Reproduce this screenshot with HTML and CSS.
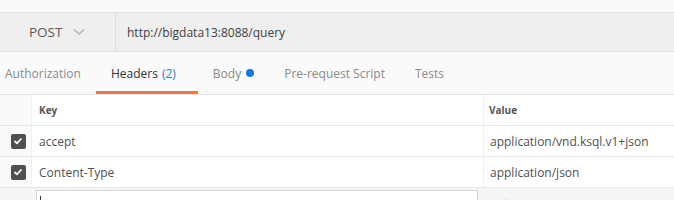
FILE: index.html
```html
<!DOCTYPE html>
<html lang="en">
<head>
    <meta charset="UTF-8">
    <title>request</title>
    <link rel="stylesheet" href="styles.css">
</head>
<body>

    <!-- 请求地址栏 -->
    <div class="url-bar">
        <div class="method">
            <span>POST</span>
            <svg class="chevron" width="12" height="8" viewBox="0 0 12 8"><path d="M1 1.5 L6 6 L11 1.5" fill="none" stroke="#b5b5b5" stroke-width="1.6"/></svg>
        </div>
        <div class="url">http://bigdata13:8088/query</div>
    </div>

    <div class="tabs">
        <div class="tab">Authorization</div>
        <div class="tab active">Headers <span class="count">(2)</span></div>
        <div class="tab">Body <span class="dot"></span></div>
        <div class="tab">Pre-request Script</div>
        <div class="tab">Tests</div>
    </div>

    <div class="table">
        <div class="row head">
            <div class="check-col"></div>
            <div class="key-col">Key</div>
            <div class="value-col">Value</div>
        </div>
        <div class="row">
            <div class="check-col"><span class="checkbox"><svg width="10" height="8" viewBox="0 0 10 8"><path d="M1.5 4 L4 6.3 L8.5 1.5" fill="none" stroke="#fff" stroke-width="1.8"/></svg></span></div>
            <div class="key-col">accept</div>
            <div class="value-col">application/vnd.ksql.v1+json</div>
        </div>
        <div class="row">
            <div class="check-col"><span class="checkbox"><svg width="10" height="8" viewBox="0 0 10 8"><path d="M1.5 4 L4 6.3 L8.5 1.5" fill="none" stroke="#fff" stroke-width="1.8"/></svg></span></div>
            <div class="key-col">Content-Type</div>
            <div class="value-col">application/json</div>
        </div>
        <div class="row new">
            <div class="check-col"></div>
            <div class="key-input"><span class="cursor"></span><span class="placeholder">Key</span></div>
            <div class="value-input"><span class="placeholder">Value</span></div>
        </div>
    </div>
</body>
</html>
```

FILE: styles.css
```css
body {
    margin: 0;
    font-family: "Open Sans", "Noto Sans", sans-serif;
    background-color: #fafafa;
    overflow: hidden;
}

/* 地址栏 */
.url-bar {
    display: flex;
    margin-top: 12px;
    height: 38px;
    border-top: 1px solid #dedede;
    border-bottom: 1px solid #dedede;
    background-color: #efefef;
}

.method {
    width: 116px;
    box-sizing: border-box;
    border-right: 1px solid #dcdcdc;
    display: flex;
    align-items: center;
    padding-left: 29px;
    gap: 11px;
    font-size: 13.5px;
    color: #5a5a5a;
}

.url {
    display: flex;
    align-items: center;
    padding-left: 11px;
    font-size: 12px;
    color: #404040;
}

/* 标签页 */
.tabs {
    display: flex;
    height: 42px;
    margin-left: -10px;
    border-bottom: 1px solid #e3e3e3;
}

.tab {
    display: flex;
    align-items: center;
    padding: 0 15px;
    font-size: 12px;
    color: #8a8a8a;
    box-sizing: border-box;
    border-bottom: 3px solid transparent;
    padding-top: 3px;
}

.tab.active {
    color: #333;
    border-bottom-color: #ef7a36;
    padding-right: 22px;
}

.count {
    color: #2d7fc9;
    margin-left: 4px;
}

.dot {
    display: inline-block;
    width: 8px;
    height: 8px;
    border-radius: 50%;
    background-color: #0d78e8;
    margin-left: 5px;
}

/* 表格 */
.table {
    background-color: #fff;
}

.row {
    display: flex;
    height: 30px;
    border-bottom: 1px solid #e6e6e6;
    font-size: 12px;
    color: #505050;
}

.check-col {
    width: 32px;
    flex-shrink: 0;
    border-right: 1px solid #f0f0f0;
    background-color: #fafafa;
    display: flex;
    align-items: center;
    justify-content: center;
    padding-left: 5px;
    box-sizing: border-box;
}

.checkbox {
    width: 15px;
    height: 15px;
    border-radius: 2px;
    background-color: #505050;
    display: flex;
    align-items: center;
    justify-content: center;
}

.key-col {
    width: 451px;
    display: flex;
    align-items: center;
    padding-left: 7px;
    box-sizing: border-box;
}

.value-col {
    flex: 1;
    display: flex;
    align-items: center;
    padding-left: 6px;
    border-left: 1px solid #f0f0f0;
}

.head {
    height: 30px;
    font-size: 10px;
    font-weight: bold;
    color: #555;
}

.head .value-col {
    padding-left: 5px;
}

.row.new {
    border-bottom: none;
    background-color: #f5f5f5;
}

.row.new .check-col {
    width: 36px;
    border-right: none;
    background-color: #f5f5f5;
}

.key-input {
    width: 442px;
    margin-top: 2px;
    border: 1px solid #d4d4d4;
    background-color: #fff;
    display: flex;
    align-items: flex-start;
    padding: 5px 0 0 3px;
    box-sizing: border-box;
}

.cursor {
    width: 1px;
    height: 16px;
    background-color: #333;
}

.placeholder {
    color: #c8c8c8;
    font-size: 12px;
    margin-left: 1px;
}

.value-input {
    flex: 1;
    padding: 8px 0 0 12px;
}
```
